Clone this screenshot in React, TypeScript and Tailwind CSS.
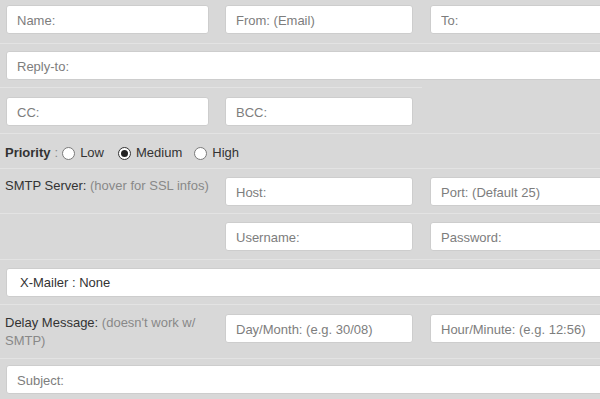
import type { ReactNode } from "react";

const font = { fontFamily: '"Liberation Sans", Arial, sans-serif' };

function Field({ placeholder, className = "" }: { placeholder: string; className?: string }) {
  return (
    <input
      type="text"
      placeholder={placeholder}
      className={`h-[29px] shrink-0 rounded-[3px] border border-[#cdcdcd] bg-white px-[10px] pt-[1px] text-[13px] text-[#333] placeholder:text-[#7d7d7d] focus:outline-none ${className}`}
    />
  );
}

function Radio({ label, checked = false }: { label: string; checked?: boolean }) {
  return (
    <label className="flex items-center">
      <span
        className={`flex h-[13px] w-[13px] items-center justify-center rounded-full border bg-white ${
          checked ? "border-[#333]" : "border-[#7a7a7a]"
        }`}
      >
        {checked && <span className="h-[7px] w-[7px] rounded-full bg-[#222]" />}
      </span>
      <span className="ml-[5px] text-[13px] text-[#333]">{label}</span>
    </label>
  );
}

function Label({ title, hint }: { title: string; hint: string }) {
  return (
    <div className="w-[225px] shrink-0 pl-[5px] pr-[12px] text-[13px] leading-[18px] text-[#888]">
      <span className="text-[#333]">{title}</span> {hint}
    </div>
  );
}

function Row({ children, className = "" }: { children: ReactNode; className?: string }) {
  return <div className={`flex ${className}`}>{children}</div>;
}

export default function App() {
  return (
    <div className="h-[399px] w-[600px] overflow-hidden bg-[#d8d8d8]" style={font}>
      <div className="w-[640px]">
        <Row className="items-center pb-[9px] pl-[6px] pt-[5px]">
          <Field placeholder="Name:" className="w-[203px]" />
          <Field placeholder="From: (Email)" className="ml-[16px] w-[188px]" />
          <Field placeholder="To:" className="ml-[17px] w-[188px]" />
        </Row>

        <Row className="border-t border-[#e3e3e3] pb-[7px] pl-[6px] pt-[7px]">
          <Field placeholder="Reply-to:" className="w-[624px]" />
        </Row>

        <div className="w-[422px] border-t border-[#e3e3e3]" />
        <Row className="pb-[7px] pl-[6px] pt-[9px]">
          <Field placeholder="CC:" className="w-[203px]" />
          <Field placeholder="BCC:" className="ml-[16px] w-[188px]" />
        </Row>

        <Row className="items-center border-t border-[#e3e3e3] pb-[6px] pl-[5px] pt-[10px] leading-[18px]">
          <span className="text-[13px] font-bold text-[#333]">Priority</span>
          <span className="ml-[4px] mr-[4px] text-[13px] text-[#888]">:</span>
          <Radio label="Low" />
          <span className="w-[14px]" />
          <Radio label="Medium" checked />
          <span className="w-[12px]" />
          <Radio label="High" />
        </Row>

        <Row className="items-start border-t border-[#e3e3e3] pb-[7px] pt-[8px]">
          <Label title="SMTP Server:" hint="(hover for SSL infos)" />
          <Field placeholder="Host:" className="w-[188px]" />
          <Field placeholder="Port: (Default 25)" className="ml-[17px] w-[188px]" />
        </Row>

        <Row className="items-start border-t border-[#e3e3e3] pb-[8px] pt-[8px]">
          <div className="w-[225px] shrink-0" />
          <Field placeholder="Username:" className="w-[188px]" />
          <Field placeholder="Password:" className="ml-[17px] w-[188px]" />
        </Row>

        <Row className="border-t border-[#e3e3e3] pb-[7px] pl-[6px] pt-[8px]">
          <div className="flex h-[29px] w-[624px] items-center rounded-[3px] border border-[#cdcdcd] bg-white pl-[13px] pt-[1px] text-[13px] text-[#333]">
            X-Mailer : None
          </div>
        </Row>

        <Row className="items-start border-t border-[#e3e3e3] pb-[8px] pt-[9px]">
          <Label title="Delay Message:" hint="(doesn't work w/ SMTP)" />
          <Field placeholder="Day/Month: (e.g. 30/08)" className="w-[188px]" />
          <Field placeholder="Hour/Minute: (e.g. 12:56)" className="ml-[17px] w-[188px]" />
        </Row>

        <Row className="border-t border-[#e3e3e3] pb-[7px] pl-[6px] pt-[6px]">
          <Field placeholder="Subject:" className="w-[624px]" />
        </Row>
      </div>
    </div>
  );
}
